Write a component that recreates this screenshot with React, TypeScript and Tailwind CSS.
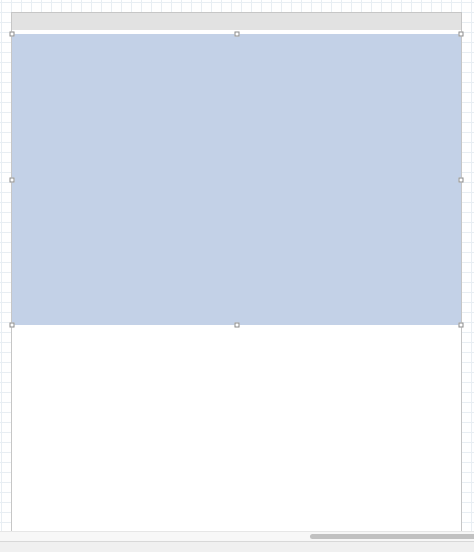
const handles = [
  "left-0 top-0",
  "left-1/2 top-0",
  "left-full top-0",
  "left-0 top-1/2",
  "left-full top-1/2",
  "left-0 top-full",
  "left-1/2 top-full",
  "left-full top-full",
];

export default function App() {
  return (
    <div className="flex h-[552px] w-[474px] flex-col overflow-hidden bg-white font-['Liberation_Sans',sans-serif]">
      {/* canvas with grid */}
      <div className="flex flex-1 flex-col bg-white bg-[linear-gradient(to_right,#e8eef3_1px,transparent_1px),linear-gradient(to_bottom,#e8eef3_1px,transparent_1px)] bg-[size:10px_10px] bg-[position:1px_2px]">
        <div className="ml-[11px] mt-[12px] flex w-[451px] flex-1 flex-col border-x border-t border-[#c6c6c6] bg-white">
          <div className="h-[17px] bg-[#e2e2e2]" />
          <div className="h-[4px] bg-white" />
          <div className="relative h-[291px] bg-[#c3d1e7]">
            {handles.map((h) => (
              <span
                key={h}
                className={`absolute ${h} h-[5px] w-[5px] -translate-x-1/2 -translate-y-1/2 border border-[#8a8a8a] bg-white`}
              />
            ))}
          </div>
          <div className="flex-1 bg-white" />
        </div>
      </div>
      {/* horizontal scrollbar */}
      <div className="flex h-[10px] items-center border-t border-[#e6e6e6] bg-[#f7f7f7]">
        <div className="ml-[310px] h-[5px] flex-1 rounded-l-full bg-[#c1c1c1]" />
      </div>
      <div className="h-[11px] border-t border-[#d8d8d8] bg-[#f0f0f0]" />
    </div>
  );
}
